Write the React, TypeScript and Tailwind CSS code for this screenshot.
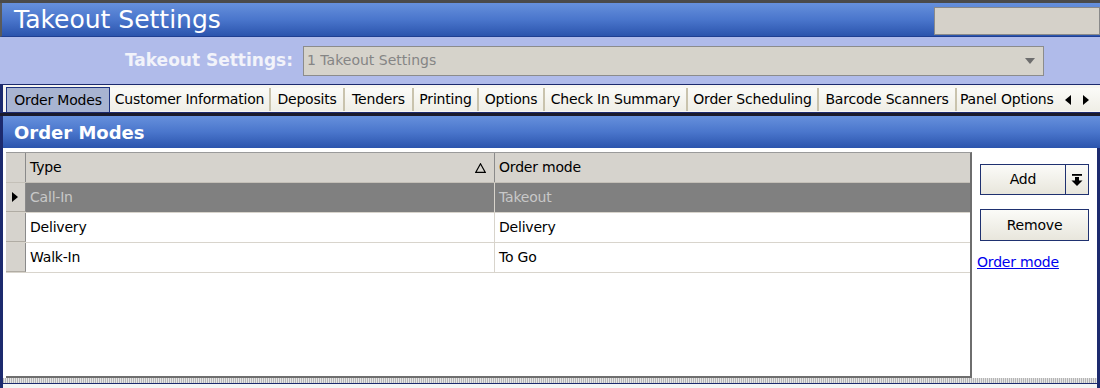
import React from "react";

const tabs: { label: string; w: string }[] = [
  { label: "Customer Information", w: "w-[161px]" },
  { label: "Deposits", w: "w-[74px]" },
  { label: "Tenders", w: "w-[69px]" },
  { label: "Printing", w: "w-[65px]" },
  { label: "Options", w: "w-[66px]" },
  { label: "Check In Summary", w: "w-[143px]" },
  { label: "Order Scheduling", w: "w-[131px]" },
  { label: "Barcode Scanners", w: "w-[138px]" },
];

const rows = [
  { type: "Call-In", mode: "Takeout", selected: true },
  { type: "Delivery", mode: "Delivery", selected: false },
  { type: "Walk-In", mode: "To Go", selected: false },
];

export default function App() {
  return (
    <div className="w-[1100px] h-[388px] overflow-hidden bg-white flex flex-col [font-family:'DejaVu_Sans',Tahoma,sans-serif] text-black">
      <div className="h-[3px] bg-[#4a4a4a] shrink-0" />
      {/* Title bar */}
      <div className="h-[34px] shrink-0 flex items-center justify-between pl-[12px] border-l-2 border-[#5a5a5a] bg-[linear-gradient(to_bottom,#6690dc,#4a76cc_50%,#2b54ad)] border-b border-b-[#1f3f92]">
        <span className="text-white text-[25px] leading-none">Takeout Settings</span>
        <div className="w-[166px] h-[28px] bg-[#d5d1c9] border border-[#8a8a8a] mt-[2px]" />
      </div>
      {/* Settings selector row */}
      <div className="h-[47px] shrink-0 bg-[#b0bbea] flex items-center">
        <div className="w-[300px] pr-[7px] text-right text-[17px] font-bold text-[#f2f3fa]">
          Takeout Settings:
        </div>
        <div className="ml-[3px] w-[741px] h-[30px] bg-[#d6d3cb] border border-[#8c8c8c] flex items-center justify-between pl-[3px] pr-[8px]">
          <span className="text-[14px] text-[#858585]">1 Takeout Settings</span>
          <svg width="10" height="6" viewBox="0 0 10 6">
            <polygon points="0,0 10,0 5,6" fill="#6d6d6d" />
          </svg>
        </div>
      </div>
      {/* Tab row */}
      <div className="h-[29px] shrink-0 flex items-stretch border-t border-[#1c2a6e] border-l-[3px] border-l-[#1c2a6e] bg-[#f7f6f1] pl-[3px] pt-[2px] border-b border-b-[#1c2a6e]">
        <div className="w-[104px] shrink-0 flex items-center justify-center bg-[#a8b4d1] border border-[#1f3480] border-b-0 text-[14px] tracking-[-0.2px]">
          Order Modes
        </div>
        {tabs.map((t) => (
          <div
            key={t.label}
            className={`${t.w} shrink-0 flex items-center justify-center text-[14px] tracking-[-0.2px] whitespace-nowrap bg-[linear-gradient(to_bottom,#fbfbf8,#efeee6)] border-r-2 border-r-[#c9c3ad] my-[1px]`}
          >
            {t.label}
          </div>
        ))}
        <div className="flex-1 min-w-0 overflow-hidden flex items-center pl-[3px] text-[14px] tracking-[-0.2px] bg-[linear-gradient(to_bottom,#fbfbf8,#efeee6)] whitespace-nowrap my-[1px]">
          <span className="w-[100px] shrink-0 overflow-hidden">Panel Options</span>
          <div className="flex items-center gap-[12px] pl-[5px]">
            <svg width="6" height="10" viewBox="0 0 6 10">
              <polygon points="6,0 6,10 0,5" fill="#000" />
            </svg>
            <svg width="6" height="10" viewBox="0 0 6 10">
              <polygon points="0,0 0,10 6,5" fill="#000" />
            </svg>
          </div>
        </div>
      </div>
      <div className="h-[3px] shrink-0 bg-[#1a1a2a]" />
      {/* Order Modes header */}
      <div className="h-[32px] shrink-0 flex items-center pl-[11px] border-l-[3px] border-[#1c2a6e] bg-[linear-gradient(to_bottom,#6690dc,#4a76cc_50%,#2b54ad)]">
        <span className="text-white text-[18px] font-bold">Order Modes</span>
      </div>
      {/* Body */}
      <div className="flex-1 min-h-0 flex border-l-[3px] border-r-[3px] border-[#1c2a6e] bg-white">
        {/* Grid */}
        <div className="w-[966px] shrink-0 ml-[3px] mt-[4px] border-t border-[#9a9a9a] border-r-2 border-r-[#6e6e6e] border-b-2 border-b-[#6e6e6e] flex flex-col">
          <div className="h-[30px] shrink-0 flex bg-[#d6d3cd] border-b border-[#c4c0b8]">
            <div className="w-[20px] shrink-0 border-r border-[#8a8a8a]" />
            <div className="w-[469px] shrink-0 flex items-center justify-between pl-[4px] pr-[8px] text-[14px] tracking-[-0.2px] border-r border-[#8a8a8a]">
              <span>Type</span>
              <svg width="11" height="10" viewBox="0 0 11 10">
                <polygon points="5.5,0.8 10.2,9.3 0.8,9.3" fill="none" stroke="#000" strokeWidth="1.2" />
              </svg>
            </div>
            <div className="flex-1 flex items-center pl-[4px] text-[14px] tracking-[-0.2px]">Order mode</div>
          </div>
          {rows.map((r) => (
            <div
              key={r.type}
              className={`h-[30px] shrink-0 flex border-b border-[#d8d4cc] ${r.selected ? "bg-[#808080] text-[#c8c8c8]" : "bg-white text-black"}`}
            >
              <div className="w-[20px] shrink-0 bg-[#d6d3cd] border-r border-[#8a8a8a] border-b border-b-[#b0aca4] flex items-center pl-[6px]">
                {r.selected && (
                  <svg width="6" height="10" viewBox="0 0 6 10">
                    <polygon points="0,0 0,10 6,5" fill="#000" />
                  </svg>
                )}
              </div>
              <div className="w-[469px] shrink-0 flex items-center pl-[4px] text-[14px] tracking-[-0.2px] border-r border-[#d8d4cc]">
                {r.type}
              </div>
              <div className="flex-1 flex items-center pl-[4px] text-[14px] tracking-[-0.2px]">{r.mode}</div>
            </div>
          ))}
          <div className="flex-1" />
        </div>
        {/* Right panel */}
        <div className="flex-1 flex flex-col pl-[8px] pt-[16px]">
          <div className="flex w-[109px] h-[31px]">
            <button className="w-[86px] h-full border border-[#1f3170] bg-[linear-gradient(to_bottom,#fbfbf8,#e8e6dc)] text-[14px] tracking-[-0.2px]">
              Add
            </button>
            <button className="w-[23px] h-full border border-l-0 border-[#1f3170] bg-[linear-gradient(to_bottom,#fbfbf8,#e8e6dc)] flex items-center justify-center">
              <svg width="12" height="14" viewBox="0 0 12 14">
                <rect x="1" y="1" width="10" height="1.8" fill="#000" />
                <rect x="4" y="4" width="4" height="4" fill="#000" />
                <polygon points="0.5,7.5 11.5,7.5 6,13" fill="#000" />
              </svg>
            </button>
          </div>
          <button className="mt-[14px] w-[109px] h-[32px] border border-[#1f3170] bg-[linear-gradient(to_bottom,#fbfbf8,#e8e6dc)] text-[14px] tracking-[-0.2px]">
            Remove
          </button>
          <a className="mt-[11px] -ml-[3px] text-[14px] tracking-[-0.2px] text-[#0000ee] underline cursor-pointer">
            Order mode
          </a>
        </div>
      </div>
      {/* Bottom splitter */}
      <div className="h-[5px] shrink-0 border-l-[3px] border-r-[3px] border-[#1c2a6e] bg-[repeating-linear-gradient(90deg,#b4b4b4_0px,#b4b4b4_1px,#e6e6e6_1px,#e6e6e6_2px)]" />
      <div className="h-[1px] shrink-0 bg-[#1c2a6e]" />
      <div className="h-[4px] shrink-0 bg-[#f4f4f4] border-l-[3px] border-r-[3px] border-[#1c2a6e]" />
    </div>
  );
}
